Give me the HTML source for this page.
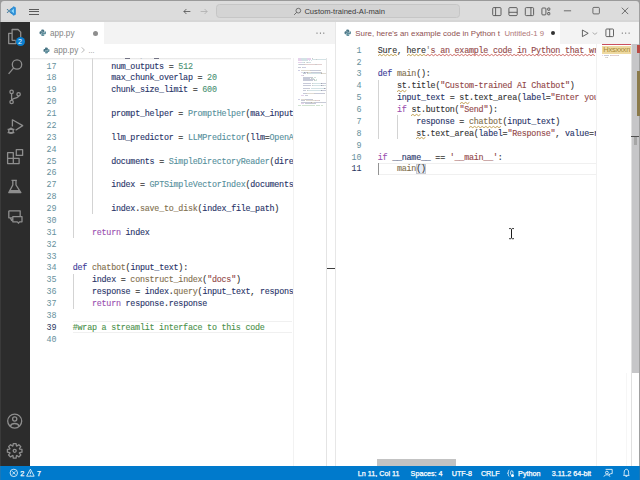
<!DOCTYPE html><html><head><meta charset="utf-8"><style>
html,body{margin:0;padding:0}
body{width:640px;height:480px;overflow:hidden;position:relative;background:#ffffff;font-family:"Liberation Sans",sans-serif}
.cl{position:absolute;white-space:pre;-webkit-text-stroke:0.12px currentColor;font-family:"Liberation Mono",monospace;font-size:8.400px;letter-spacing:-0.2283px;line-height:11.875px;height:11.875px}
.ln{position:absolute;width:30px;text-align:right;white-space:pre;font-family:"Liberation Mono",monospace;font-size:8.400px;letter-spacing:-0.2283px;line-height:11.875px}
.ui{position:absolute;white-space:pre;font-family:"Liberation Sans",sans-serif;line-height:10px}
</style></head><body>
<div style="position:absolute;left:0.000px;top:0.000px;width:640.000px;height:21.875px;background:#dcdcdc"></div>
<div style="position:absolute;left:0.000px;top:19.600px;width:640.000px;height:2.300px;background:#d6d6d6"></div>
<svg style="position:absolute;left:5.900px;top:6.400px;" width="10.5" height="10" viewBox="0 0 100 100"><path fill="#2d6f96" d="M4 33 L12 29 L60 72 L52 80 Z M4 67 L12 71 L60 28 L52 20 Z"/><path fill="#2f8fd6" d="M73 3 L96 14 V86 L73 97 L36 60 L44 50 L36 40 Z"/><path fill="#8fdcff" d="M76 26 L50 50 L76 74 Z"/></svg>
<div style="position:absolute;left:29.000px;top:8.550px;width:9.800px;height:0.900px;background:#5a5a5a"></div>
<div style="position:absolute;left:29.000px;top:11.050px;width:9.800px;height:0.900px;background:#5a5a5a"></div>
<div style="position:absolute;left:29.000px;top:13.550px;width:9.800px;height:0.900px;background:#5a5a5a"></div>
<svg style="position:absolute;left:181.500px;top:7.000px;" width="10" height="9" viewBox="0 0 16 16"><path d="M14 8H2.5 M7 3.5 L2.5 8 L7 12.5" fill="none" stroke="#424242" stroke-width="1.3"/></svg>
<svg style="position:absolute;left:198.500px;top:7.000px;" width="10" height="9" viewBox="0 0 16 16"><path d="M2 8H13.5 M9 3.5 L13.5 8 L9 12.5" fill="none" stroke="#a8a8a8" stroke-width="1.3"/></svg>
<div style="position:absolute;left:215.600px;top:3.900px;width:244.800px;height:14.600px;background:#d4d4d4;border:0.65px solid #c6c6c6;border-radius:3.5px;box-sizing:border-box"></div>
<svg style="position:absolute;left:292.500px;top:6.800px;" width="9" height="9" viewBox="0 0 16 16"><circle cx="9.5" cy="6.5" r="4.2" fill="none" stroke="#505050" stroke-width="1.3"/><path d="M6.5 9.5 L2 14" stroke="#505050" stroke-width="1.4"/></svg>
<div style="position:absolute;left:304.400px;top:6.800px;white-space:pre;font-size:7.6px;color:#3b3b3b;line-height:10px">Custom-trained-AI-main</div>
<svg style="position:absolute;left:0;top:0;" width="640" height="480" viewBox="0 0 640 480"><g fill="none" stroke="#4a4a4a" stroke-width="0.85"><rect x="492.7" y="7.6" width="8.3" height="8.0" rx="1"/><path d="M495.6 7.6 V15.6"/><rect x="508.9" y="7.6" width="8.3" height="8.0" rx="1"/><path d="M508.9 12.3 H517.2"/><rect x="525.3" y="7.6" width="8.3" height="8.0" rx="1"/><path d="M530.9 7.6 V15.6"/><rect x="541.9" y="8.0" width="4.0" height="6.9" rx="0.8"/><rect x="547.7" y="8.0" width="2.1" height="2.3" rx="0.4"/><rect x="547.7" y="12.5" width="2.1" height="2.3" rx="0.4"/></g></svg>
<svg style="position:absolute;left:0;top:0;" width="640" height="480" viewBox="0 0 640 480"><g fill="none" stroke="#3c3c3c" stroke-width="0.7"><path d="M563.9 10.8 H571.1"/><rect x="592.9" y="7.4" width="6.5" height="6.5" rx="1"/><path d="M621.8 7.7 L628.2 14.1 M628.2 7.7 L621.8 14.1"/></g></svg>
<div style="position:absolute;left:0.000px;top:21.875px;width:30.000px;height:444.375px;background:#2c2c2c"></div>
<svg style="position:absolute;left:0;top:0;" width="640" height="480" viewBox="0 0 640 480"><path fill="none" stroke="#8e8e8e" stroke-width="1.3" stroke-linejoin="round" d="M12.1 33.3 H8.7 V43.6 H16.0 V40.4"/><path fill="none" stroke="#8e8e8e" stroke-width="1.3" stroke-linejoin="round" d="M12.1 40.4 V29.5 H18.1 L20.7 32.1 V37.2 M12.1 40.4 H15.6"/><circle fill="none" stroke="#8e8e8e" stroke-width="1.3" stroke-linejoin="round" cx="17.0" cy="64.5" r="4.7"/><path fill="none" stroke="#8e8e8e" stroke-width="1.3" stroke-linejoin="round" d="M13.7 67.9 L8.6 73.9" stroke-width="1.5"/><circle fill="none" stroke="#8e8e8e" stroke-width="1.3" stroke-linejoin="round" cx="11.6" cy="91.9" r="1.7"/><circle fill="none" stroke="#8e8e8e" stroke-width="1.3" stroke-linejoin="round" cx="11.6" cy="102.0" r="1.7"/><circle fill="none" stroke="#8e8e8e" stroke-width="1.3" stroke-linejoin="round" cx="18.6" cy="94.3" r="1.7"/><path fill="none" stroke="#8e8e8e" stroke-width="1.3" stroke-linejoin="round" d="M11.6 93.6 V100.3 M18.6 96.0 C18.6 98.5 12.2 97.8 11.9 100.3"/><path fill="none" stroke="#8e8e8e" stroke-width="1.3" stroke-linejoin="round" d="M12.4 126.5 V119.8 L22.7 125.6 L15.6 130.2"/><circle fill="none" stroke="#8e8e8e" stroke-width="1.3" stroke-linejoin="round" cx="11.0" cy="131.0" r="2.3"/><path fill="none" stroke="#8e8e8e" stroke-width="1.3" stroke-linejoin="round" d="M7.6 129.3 H14.4 M7.6 132.6 H14.4 M11 128.7 V127.6"/><path fill="none" stroke="#8e8e8e" stroke-width="1.3" stroke-linejoin="round" d="M7.6 152.6 H13.3 V163.6 H7.6 Z M7.6 158.3 H19.1 V163.6 H13.3 M16.3 149.6 H22.6 V155.4 H16.3 Z"/><path fill="none" stroke="#8e8e8e" stroke-width="1.3" stroke-linejoin="round" d="M11.5 180.4 H16.9 M12.8 180.6 V185.0 L8.8 192.6 H20.9 L16.0 185.0 V180.6"/><path fill="#8e8e8e" d="M10.1 190.0 H19.6 L20.6 192.4 H9.0 Z"/><path fill="none" stroke="#8e8e8e" stroke-width="1.3" stroke-linejoin="round" d="M8.8 210.8 H20.2 V216.5 M12.6 217.8 H8.8 V210.8 M10.3 217.8 L11.6 220.5 L12.6 219"/><path fill="none" stroke="#8e8e8e" stroke-width="1.3" stroke-linejoin="round" d="M12.8 216.6 H22.0 V221.8 H19.5 L18.5 223.2 L17.3 221.8 H12.8 Z"/><circle fill="none" stroke="#8e8e8e" stroke-width="1.3" stroke-linejoin="round" cx="14.7" cy="421.1" r="7.0"/><circle fill="none" stroke="#8e8e8e" stroke-width="1.3" stroke-linejoin="round" cx="14.7" cy="419.0" r="2.1"/><path fill="none" stroke="#8e8e8e" stroke-width="1.3" stroke-linejoin="round" d="M10.3 426.2 C11.5 422.6 17.9 422.6 19.1 426.2"/><path fill="none" stroke="#8e8e8e" stroke-width="1.3" stroke-linejoin="round" d="M19.59,449.04 L21.97,449.40 L21.97,452.20 L19.59,452.56 L19.41,453.01 L20.83,454.95 L18.85,456.93 L16.91,455.51 L16.46,455.69 L16.10,458.07 L13.30,458.07 L12.94,455.69 L12.49,455.51 L10.55,456.93 L8.57,454.95 L9.99,453.01 L9.81,452.56 L7.43,452.20 L7.43,449.40 L9.81,449.04 L9.99,448.59 L8.57,446.65 L10.55,444.67 L12.49,446.09 L12.94,445.91 L13.30,443.53 L16.10,443.53 L16.46,445.91 L16.91,446.09 L18.85,444.67 L20.83,446.65 L19.41,448.59 Z"/><circle fill="none" stroke="#8e8e8e" stroke-width="1.3" stroke-linejoin="round" cx="14.7" cy="450.8" r="1.5"/></svg>
<div style="position:absolute;left:15.600px;top:36.700px;width:9.200px;height:9.200px;background:#0a7fd0;border-radius:50%"></div>
<div style="position:absolute;left:18.000px;top:37.900px;white-space:pre;font-size:7.0px;color:#ffffff;line-height:7px">2</div>
<div style="position:absolute;left:30.000px;top:21.875px;width:305.600px;height:21.875px;background:#f3f3f3"></div>
<div style="position:absolute;left:30.000px;top:21.875px;width:73.750px;height:21.875px;background:#ffffff"></div>
<svg style="position:absolute;left:38.800px;top:29.100px;" width="7.5" height="7.5" viewBox="0 0 16 16"><path fill="#4a7686" d="M8 1 C4.5 1 4.7 2.6 4.7 2.6 V4.3 H8.1 V4.8 H3.2 C3.2 4.8 1 4.6 1 8.1 C1 11.6 2.9 11.4 2.9 11.4 H4.1 V9.8 C4.1 9.8 4 7.9 6 7.9 H9.3 C9.3 7.9 11.1 7.9 11.1 6.1 V3 C11.1 3 11.4 1 8 1Z"/><path fill="#5f8e9c" d="M8 15 C11.5 15 11.3 13.4 11.3 13.4 V11.7 H7.9 V11.2 H12.8 C12.8 11.2 15 11.4 15 7.9 C15 4.4 13.1 4.6 13.1 4.6 H11.9 V6.2 C11.9 6.2 12 8.1 10 8.1 H6.7 C6.7 8.1 4.9 8.1 4.9 9.9 V13 C4.9 13 4.6 15 8 15Z"/></svg>
<div style="position:absolute;left:50.000px;top:29.300px;white-space:pre;font-size:8.17px;color:#858585;line-height:10px">app.py</div>
<div style="position:absolute;left:93.000px;top:30.700px;width:5.000px;height:5.000px;background:#8e8e8e;border-radius:50%"></div>
<svg style="position:absolute;left:43.200px;top:46.900px;" width="7" height="7" viewBox="0 0 16 16"><path fill="#4a7686" d="M8 1 C4.5 1 4.7 2.6 4.7 2.6 V4.3 H8.1 V4.8 H3.2 C3.2 4.8 1 4.6 1 8.1 C1 11.6 2.9 11.4 2.9 11.4 H4.1 V9.8 C4.1 9.8 4 7.9 6 7.9 H9.3 C9.3 7.9 11.1 7.9 11.1 6.1 V3 C11.1 3 11.4 1 8 1Z"/><path fill="#5f8e9c" d="M8 15 C11.5 15 11.3 13.4 11.3 13.4 V11.7 H7.9 V11.2 H12.8 C12.8 11.2 15 11.4 15 7.9 C15 4.4 13.1 4.6 13.1 4.6 H11.9 V6.2 C11.9 6.2 12 8.1 10 8.1 H6.7 C6.7 8.1 4.9 8.1 4.9 9.9 V13 C4.9 13 4.6 15 8 15Z"/></svg>
<div style="position:absolute;left:53.750px;top:46.400px;white-space:pre;font-size:8.17px;color:#858585;line-height:10px">app.py</div>
<svg style="position:absolute;left:80.800px;top:47.400px;" width="4.5" height="6" viewBox="0 0 6 8"><path d="M1 0.5 L4.5 4 L1 7.5" fill="none" stroke="#858585" stroke-width="0.8"/></svg>
<div style="position:absolute;left:88.600px;top:46.200px;white-space:pre;font-size:7px;color:#858585;line-height:10px">...</div>
<div style="position:absolute;left:30px;top:57.5px;width:262.8px;height:408.75px;overflow:hidden">
<div style="position:absolute;left:42.750px;top:263.750px;width:219.250px;height:11.875px;border-top:0.65px solid #f0f0f0;border-bottom:0.65px solid #f0f0f0;box-sizing:border-box"></div>
<div style="position:absolute;left:42.600px;top:-9.375px;width:0.650px;height:190.000px;background:#d3d3d3"></div>
<div style="position:absolute;left:61.850px;top:-9.375px;width:0.650px;height:166.250px;background:#d3d3d3"></div>
<div style="position:absolute;left:42.600px;top:216.250px;width:0.650px;height:35.625px;background:#d3d3d3"></div>
<div class="cl" style="left:42.750px;top:-7.875px"><span style="color:#333333">        </span><span style="color:#283468">max_input_size</span><span style="color:#333333"> = </span><span style="color:#4d9375">4096</span></div>
<div class="ln" style="left:-3.800px;top:4.000px;color:#66909c">17</div>
<div class="cl" style="left:42.750px;top:4.000px"><span style="color:#333333">        </span><span style="color:#283468">num_outputs</span><span style="color:#333333"> = </span><span style="color:#4d9375">512</span></div>
<div class="ln" style="left:-3.800px;top:15.875px;color:#66909c">18</div>
<div class="cl" style="left:42.750px;top:15.875px"><span style="color:#333333">        </span><span style="color:#283468">max_chunk_overlap</span><span style="color:#333333"> = </span><span style="color:#4d9375">20</span></div>
<div class="ln" style="left:-3.800px;top:27.750px;color:#66909c">19</div>
<div class="cl" style="left:42.750px;top:27.750px"><span style="color:#333333">        </span><span style="color:#283468">chunk_size_limit</span><span style="color:#333333"> = </span><span style="color:#4d9375">600</span></div>
<div class="ln" style="left:-3.800px;top:39.625px;color:#66909c">20</div>
<div class="cl" style="left:42.750px;top:39.625px"></div>
<div class="ln" style="left:-3.800px;top:51.500px;color:#66909c">21</div>
<div class="cl" style="left:42.750px;top:51.500px"><span style="color:#333333">        </span><span style="color:#283468">prompt_helper</span><span style="color:#333333"> = </span><span style="color:#56909c">PromptHelper</span><span style="color:#333333">(</span><span style="color:#283468">max_input_size</span><span style="color:#333333">, </span><span style="color:#283468">num_outputs</span><span style="color:#333333">, </span><span style="color:#283468">max_chunk_overlap</span><span style="color:#333333">)</span></div>
<div class="ln" style="left:-3.800px;top:63.375px;color:#66909c">22</div>
<div class="cl" style="left:42.750px;top:63.375px"></div>
<div class="ln" style="left:-3.800px;top:75.250px;color:#66909c">23</div>
<div class="cl" style="left:42.750px;top:75.250px"><span style="color:#333333">        </span><span style="color:#283468">llm_predictor</span><span style="color:#333333"> = </span><span style="color:#56909c">LLMPredictor</span><span style="color:#333333">(</span><span style="color:#283468">llm</span><span style="color:#333333">=</span><span style="color:#56909c">OpenAI</span><span style="color:#333333">(</span><span style="color:#283468">temperature</span><span style="color:#333333">=</span><span style="color:#4d9375">0.7</span><span style="color:#333333">)</span></div>
<div class="ln" style="left:-3.800px;top:87.125px;color:#66909c">24</div>
<div class="cl" style="left:42.750px;top:87.125px"></div>
<div class="ln" style="left:-3.800px;top:99.000px;color:#66909c">25</div>
<div class="cl" style="left:42.750px;top:99.000px"><span style="color:#333333">        </span><span style="color:#283468">documents</span><span style="color:#333333"> = </span><span style="color:#56909c">SimpleDirectoryReader</span><span style="color:#333333">(</span><span style="color:#283468">directory_path</span><span style="color:#333333">).</span><span style="color:#82704e">load_data</span><span style="color:#333333">()</span></div>
<div class="ln" style="left:-3.800px;top:110.875px;color:#66909c">26</div>
<div class="cl" style="left:42.750px;top:110.875px"></div>
<div class="ln" style="left:-3.800px;top:122.750px;color:#66909c">27</div>
<div class="cl" style="left:42.750px;top:122.750px"><span style="color:#333333">        </span><span style="color:#283468">index</span><span style="color:#333333"> = </span><span style="color:#56909c">GPTSimpleVectorIndex</span><span style="color:#333333">(</span><span style="color:#283468">documents</span><span style="color:#333333">, </span><span style="color:#283468">llm_predictor</span><span style="color:#333333">=</span><span style="color:#283468">llm_predictor</span></div>
<div class="ln" style="left:-3.800px;top:134.625px;color:#66909c">28</div>
<div class="cl" style="left:42.750px;top:134.625px"></div>
<div class="ln" style="left:-3.800px;top:146.500px;color:#66909c">29</div>
<div class="cl" style="left:42.750px;top:146.500px"><span style="color:#333333">        </span><span style="color:#283468">index</span><span style="color:#333333">.</span><span style="color:#82704e">save_to_disk</span><span style="color:#333333">(</span><span style="color:#283468">index_file_path</span><span style="color:#333333">)</span></div>
<div class="ln" style="left:-3.800px;top:158.375px;color:#66909c">30</div>
<div class="cl" style="left:42.750px;top:158.375px"></div>
<div class="ln" style="left:-3.800px;top:170.250px;color:#66909c">31</div>
<div class="cl" style="left:42.750px;top:170.250px"><span style="color:#333333">    </span><span style="color:#9a50b0">return</span><span style="color:#333333"> </span><span style="color:#283468">index</span></div>
<div class="ln" style="left:-3.800px;top:182.125px;color:#66909c">32</div>
<div class="cl" style="left:42.750px;top:182.125px"></div>
<div class="ln" style="left:-3.800px;top:194.000px;color:#66909c">33</div>
<div class="cl" style="left:42.750px;top:194.000px"></div>
<div class="ln" style="left:-3.800px;top:205.875px;color:#66909c">34</div>
<div class="cl" style="left:42.750px;top:205.875px"><span style="color:#3c3c98">def</span><span style="color:#333333"> </span><span style="color:#82704e">chatbot</span><span style="color:#333333">(</span><span style="color:#283468">input_text</span><span style="color:#333333">):</span></div>
<div class="ln" style="left:-3.800px;top:217.750px;color:#66909c">35</div>
<div class="cl" style="left:42.750px;top:217.750px"><span style="color:#333333">    </span><span style="color:#283468">index</span><span style="color:#333333"> = </span><span style="color:#82704e">construct_index</span><span style="color:#333333">(</span><span style="color:#924848">&quot;docs&quot;</span><span style="color:#333333">)</span></div>
<div class="ln" style="left:-3.800px;top:229.625px;color:#66909c">36</div>
<div class="cl" style="left:42.750px;top:229.625px"><span style="color:#333333">    </span><span style="color:#283468">response</span><span style="color:#333333"> = </span><span style="color:#283468">index</span><span style="color:#333333">.</span><span style="color:#82704e">query</span><span style="color:#333333">(</span><span style="color:#283468">input_text</span><span style="color:#333333">, </span><span style="color:#283468">response_mode</span><span style="color:#333333">=</span><span style="color:#924848">&quot;compact&quot;</span><span style="color:#333333">)</span></div>
<div class="ln" style="left:-3.800px;top:241.500px;color:#66909c">37</div>
<div class="cl" style="left:42.750px;top:241.500px"><span style="color:#333333">    </span><span style="color:#9a50b0">return</span><span style="color:#333333"> </span><span style="color:#283468">response</span><span style="color:#333333">.</span><span style="color:#283468">response</span></div>
<div class="ln" style="left:-3.800px;top:253.375px;color:#66909c">38</div>
<div class="cl" style="left:42.750px;top:253.375px"></div>
<div class="ln" style="left:-3.800px;top:265.250px;color:#283660">39</div>
<div class="cl" style="left:42.750px;top:265.250px"><span style="color:#4c924c">#wrap a streamlit interface to this code</span></div>
<div class="ln" style="left:-3.800px;top:277.125px;color:#66909c">40</div>
<div class="cl" style="left:42.750px;top:277.125px"></div>
<div style="position:absolute;left:0.000px;top:0.000px;width:261.250px;height:2.600px;background:linear-gradient(#e2e2e2,rgba(226,226,226,0))"></div>
</div>
<div style="position:absolute;left:125.400px;top:57.550px;width:4.600px;height:0.800px;background:#55556a;opacity:0.8"></div>
<div style="position:absolute;left:154.300px;top:57.550px;width:4.600px;height:0.800px;background:#55556a;opacity:0.8"></div>
<div style="position:absolute;left:298.000px;top:57.750px;width:2.500px;height:0.750px;background:#9a50b0;opacity:0.26"></div>
<div style="position:absolute;left:301.125px;top:57.750px;width:5.625px;height:0.750px;background:#56909c;opacity:0.26"></div>
<div style="position:absolute;left:307.375px;top:57.750px;width:3.750px;height:0.750px;background:#9a50b0;opacity:0.26"></div>
<div style="position:absolute;left:311.750px;top:57.750px;width:0.625px;height:0.750px;background:#333333;opacity:0.26"></div>
<div style="position:absolute;left:298.000px;top:59.000px;width:2.500px;height:0.750px;background:#9a50b0;opacity:0.26"></div>
<div style="position:absolute;left:301.125px;top:59.000px;width:5.625px;height:0.750px;background:#56909c;opacity:0.26"></div>
<div style="position:absolute;left:307.375px;top:59.000px;width:3.750px;height:0.750px;background:#9a50b0;opacity:0.26"></div>
<div style="position:absolute;left:311.750px;top:59.000px;width:3.750px;height:0.750px;background:#56909c;opacity:0.26"></div>
<div style="position:absolute;left:315.500px;top:59.000px;width:0.625px;height:0.750px;background:#333333;opacity:0.26"></div>
<div style="position:absolute;left:316.750px;top:59.000px;width:8.750px;height:0.750px;background:#56909c;opacity:0.26"></div>
<div style="position:absolute;left:325.500px;top:59.000px;width:0.500px;height:0.750px;background:#333333;opacity:0.26"></div>
<div style="position:absolute;left:298.000px;top:60.250px;width:3.750px;height:0.750px;background:#9a50b0;opacity:0.26"></div>
<div style="position:absolute;left:302.375px;top:60.250px;width:5.625px;height:0.750px;background:#56909c;opacity:0.26"></div>
<div style="position:absolute;left:308.625px;top:60.250px;width:1.250px;height:0.750px;background:#9a50b0;opacity:0.26"></div>
<div style="position:absolute;left:310.500px;top:60.250px;width:1.250px;height:0.750px;background:#56909c;opacity:0.26"></div>
<div style="position:absolute;left:298.000px;top:61.500px;width:3.750px;height:0.750px;background:#9a50b0;opacity:0.26"></div>
<div style="position:absolute;left:302.375px;top:61.500px;width:1.875px;height:0.750px;background:#56909c;opacity:0.26"></div>
<div style="position:absolute;left:304.250px;top:61.500px;width:0.625px;height:0.750px;background:#333333;opacity:0.26"></div>
<div style="position:absolute;left:305.500px;top:61.500px;width:1.250px;height:0.750px;background:#56909c;opacity:0.26"></div>
<div style="position:absolute;left:306.750px;top:61.500px;width:0.625px;height:0.750px;background:#333333;opacity:0.26"></div>
<div style="position:absolute;left:308.000px;top:61.500px;width:2.500px;height:0.750px;background:#56909c;opacity:0.26"></div>
<div style="position:absolute;left:298.000px;top:64.000px;width:1.250px;height:0.750px;background:#56909c;opacity:0.26"></div>
<div style="position:absolute;left:299.250px;top:64.000px;width:0.625px;height:0.750px;background:#333333;opacity:0.26"></div>
<div style="position:absolute;left:299.875px;top:64.000px;width:4.375px;height:0.750px;background:#283468;opacity:0.26"></div>
<div style="position:absolute;left:304.250px;top:64.000px;width:0.625px;height:0.750px;background:#333333;opacity:0.26"></div>
<div style="position:absolute;left:304.875px;top:64.000px;width:10.000px;height:0.750px;background:#924848;opacity:0.26"></div>
<div style="position:absolute;left:314.875px;top:64.000px;width:0.625px;height:0.750px;background:#333333;opacity:0.26"></div>
<div style="position:absolute;left:316.125px;top:64.000px;width:0.625px;height:0.750px;background:#333333;opacity:0.26"></div>
<div style="position:absolute;left:317.375px;top:64.000px;width:5.000px;height:0.750px;background:#924848;opacity:0.26"></div>
<div style="position:absolute;left:298.000px;top:66.500px;width:3.125px;height:0.750px;background:#283468;opacity:0.26"></div>
<div style="position:absolute;left:301.750px;top:66.500px;width:0.625px;height:0.750px;background:#333333;opacity:0.26"></div>
<div style="position:absolute;left:303.000px;top:66.500px;width:2.500px;height:0.750px;background:#3c3c98;opacity:0.26"></div>
<div style="position:absolute;left:298.000px;top:70.250px;width:1.875px;height:0.750px;background:#3c3c98;opacity:0.26"></div>
<div style="position:absolute;left:300.500px;top:70.250px;width:9.375px;height:0.750px;background:#82704e;opacity:0.26"></div>
<div style="position:absolute;left:309.875px;top:70.250px;width:0.625px;height:0.750px;background:#333333;opacity:0.26"></div>
<div style="position:absolute;left:310.500px;top:70.250px;width:8.750px;height:0.750px;background:#283468;opacity:0.26"></div>
<div style="position:absolute;left:319.250px;top:70.250px;width:1.250px;height:0.750px;background:#333333;opacity:0.26"></div>
<div style="position:absolute;left:300.500px;top:71.500px;width:1.250px;height:0.750px;background:#9a50b0;opacity:0.26"></div>
<div style="position:absolute;left:302.375px;top:71.500px;width:1.250px;height:0.750px;background:#56909c;opacity:0.26"></div>
<div style="position:absolute;left:303.625px;top:71.500px;width:0.625px;height:0.750px;background:#333333;opacity:0.26"></div>
<div style="position:absolute;left:304.250px;top:71.500px;width:2.500px;height:0.750px;background:#283468;opacity:0.26"></div>
<div style="position:absolute;left:306.750px;top:71.500px;width:0.625px;height:0.750px;background:#333333;opacity:0.26"></div>
<div style="position:absolute;left:307.375px;top:71.500px;width:3.750px;height:0.750px;background:#82704e;opacity:0.26"></div>
<div style="position:absolute;left:311.125px;top:71.500px;width:0.625px;height:0.750px;background:#333333;opacity:0.26"></div>
<div style="position:absolute;left:311.750px;top:71.500px;width:9.375px;height:0.750px;background:#283468;opacity:0.26"></div>
<div style="position:absolute;left:321.125px;top:71.500px;width:1.250px;height:0.750px;background:#333333;opacity:0.26"></div>
<div style="position:absolute;left:303.000px;top:72.750px;width:3.125px;height:0.750px;background:#283468;opacity:0.26"></div>
<div style="position:absolute;left:306.750px;top:72.750px;width:0.625px;height:0.750px;background:#333333;opacity:0.26"></div>
<div style="position:absolute;left:308.000px;top:72.750px;width:12.500px;height:0.750px;background:#56909c;opacity:0.26"></div>
<div style="position:absolute;left:320.500px;top:72.750px;width:0.625px;height:0.750px;background:#333333;opacity:0.26"></div>
<div style="position:absolute;left:321.125px;top:72.750px;width:4.875px;height:0.750px;background:#82704e;opacity:0.26"></div>
<div style="position:absolute;left:300.500px;top:75.250px;width:2.500px;height:0.750px;background:#9a50b0;opacity:0.26"></div>
<div style="position:absolute;left:303.000px;top:75.250px;width:0.625px;height:0.750px;background:#333333;opacity:0.26"></div>
<div style="position:absolute;left:303.000px;top:76.500px;width:8.750px;height:0.750px;background:#283468;opacity:0.26"></div>
<div style="position:absolute;left:312.375px;top:76.500px;width:0.625px;height:0.750px;background:#333333;opacity:0.26"></div>
<div style="position:absolute;left:313.625px;top:76.500px;width:2.500px;height:0.750px;background:#4d9375;opacity:0.26"></div>
<div style="position:absolute;left:303.000px;top:77.750px;width:6.875px;height:0.750px;background:#283468;opacity:0.26"></div>
<div style="position:absolute;left:310.500px;top:77.750px;width:0.625px;height:0.750px;background:#333333;opacity:0.26"></div>
<div style="position:absolute;left:311.750px;top:77.750px;width:1.875px;height:0.750px;background:#4d9375;opacity:0.26"></div>
<div style="position:absolute;left:303.000px;top:79.000px;width:10.625px;height:0.750px;background:#283468;opacity:0.26"></div>
<div style="position:absolute;left:314.250px;top:79.000px;width:0.625px;height:0.750px;background:#333333;opacity:0.26"></div>
<div style="position:absolute;left:315.500px;top:79.000px;width:1.250px;height:0.750px;background:#4d9375;opacity:0.26"></div>
<div style="position:absolute;left:303.000px;top:80.250px;width:10.000px;height:0.750px;background:#283468;opacity:0.26"></div>
<div style="position:absolute;left:313.625px;top:80.250px;width:0.625px;height:0.750px;background:#333333;opacity:0.26"></div>
<div style="position:absolute;left:314.875px;top:80.250px;width:1.875px;height:0.750px;background:#4d9375;opacity:0.26"></div>
<div style="position:absolute;left:303.000px;top:82.750px;width:8.125px;height:0.750px;background:#283468;opacity:0.26"></div>
<div style="position:absolute;left:311.750px;top:82.750px;width:0.625px;height:0.750px;background:#333333;opacity:0.26"></div>
<div style="position:absolute;left:313.000px;top:82.750px;width:7.500px;height:0.750px;background:#56909c;opacity:0.26"></div>
<div style="position:absolute;left:320.500px;top:82.750px;width:0.625px;height:0.750px;background:#333333;opacity:0.26"></div>
<div style="position:absolute;left:321.125px;top:82.750px;width:4.875px;height:0.750px;background:#283468;opacity:0.26"></div>
<div style="position:absolute;left:303.000px;top:85.250px;width:8.125px;height:0.750px;background:#283468;opacity:0.26"></div>
<div style="position:absolute;left:311.750px;top:85.250px;width:0.625px;height:0.750px;background:#333333;opacity:0.26"></div>
<div style="position:absolute;left:313.000px;top:85.250px;width:7.500px;height:0.750px;background:#56909c;opacity:0.26"></div>
<div style="position:absolute;left:320.500px;top:85.250px;width:0.625px;height:0.750px;background:#333333;opacity:0.26"></div>
<div style="position:absolute;left:321.125px;top:85.250px;width:1.875px;height:0.750px;background:#283468;opacity:0.26"></div>
<div style="position:absolute;left:323.000px;top:85.250px;width:0.625px;height:0.750px;background:#333333;opacity:0.26"></div>
<div style="position:absolute;left:323.625px;top:85.250px;width:2.375px;height:0.750px;background:#56909c;opacity:0.26"></div>
<div style="position:absolute;left:303.000px;top:87.750px;width:5.625px;height:0.750px;background:#283468;opacity:0.26"></div>
<div style="position:absolute;left:309.250px;top:87.750px;width:0.625px;height:0.750px;background:#333333;opacity:0.26"></div>
<div style="position:absolute;left:310.500px;top:87.750px;width:13.125px;height:0.750px;background:#56909c;opacity:0.26"></div>
<div style="position:absolute;left:323.625px;top:87.750px;width:0.625px;height:0.750px;background:#333333;opacity:0.26"></div>
<div style="position:absolute;left:324.250px;top:87.750px;width:1.750px;height:0.750px;background:#283468;opacity:0.26"></div>
<div style="position:absolute;left:303.000px;top:90.250px;width:3.125px;height:0.750px;background:#283468;opacity:0.26"></div>
<div style="position:absolute;left:306.750px;top:90.250px;width:0.625px;height:0.750px;background:#333333;opacity:0.26"></div>
<div style="position:absolute;left:308.000px;top:90.250px;width:12.500px;height:0.750px;background:#56909c;opacity:0.26"></div>
<div style="position:absolute;left:320.500px;top:90.250px;width:0.625px;height:0.750px;background:#333333;opacity:0.26"></div>
<div style="position:absolute;left:321.125px;top:90.250px;width:4.875px;height:0.750px;background:#283468;opacity:0.26"></div>
<div style="position:absolute;left:303.000px;top:92.750px;width:3.125px;height:0.750px;background:#283468;opacity:0.26"></div>
<div style="position:absolute;left:306.125px;top:92.750px;width:0.625px;height:0.750px;background:#333333;opacity:0.26"></div>
<div style="position:absolute;left:306.750px;top:92.750px;width:7.500px;height:0.750px;background:#82704e;opacity:0.26"></div>
<div style="position:absolute;left:314.250px;top:92.750px;width:0.625px;height:0.750px;background:#333333;opacity:0.26"></div>
<div style="position:absolute;left:314.875px;top:92.750px;width:9.375px;height:0.750px;background:#283468;opacity:0.26"></div>
<div style="position:absolute;left:324.250px;top:92.750px;width:0.625px;height:0.750px;background:#333333;opacity:0.26"></div>
<div style="position:absolute;left:300.500px;top:95.250px;width:3.750px;height:0.750px;background:#9a50b0;opacity:0.26"></div>
<div style="position:absolute;left:304.875px;top:95.250px;width:3.125px;height:0.750px;background:#283468;opacity:0.26"></div>
<div style="position:absolute;left:298.000px;top:99.000px;width:1.875px;height:0.750px;background:#3c3c98;opacity:0.26"></div>
<div style="position:absolute;left:300.500px;top:99.000px;width:4.375px;height:0.750px;background:#82704e;opacity:0.26"></div>
<div style="position:absolute;left:304.875px;top:99.000px;width:0.625px;height:0.750px;background:#333333;opacity:0.26"></div>
<div style="position:absolute;left:305.500px;top:99.000px;width:6.250px;height:0.750px;background:#283468;opacity:0.26"></div>
<div style="position:absolute;left:311.750px;top:99.000px;width:1.250px;height:0.750px;background:#333333;opacity:0.26"></div>
<div style="position:absolute;left:300.500px;top:100.250px;width:3.125px;height:0.750px;background:#283468;opacity:0.26"></div>
<div style="position:absolute;left:304.250px;top:100.250px;width:0.625px;height:0.750px;background:#333333;opacity:0.26"></div>
<div style="position:absolute;left:305.500px;top:100.250px;width:9.375px;height:0.750px;background:#82704e;opacity:0.26"></div>
<div style="position:absolute;left:314.875px;top:100.250px;width:0.625px;height:0.750px;background:#333333;opacity:0.26"></div>
<div style="position:absolute;left:315.500px;top:100.250px;width:3.750px;height:0.750px;background:#924848;opacity:0.26"></div>
<div style="position:absolute;left:319.250px;top:100.250px;width:0.625px;height:0.750px;background:#333333;opacity:0.26"></div>
<div style="position:absolute;left:300.500px;top:101.500px;width:5.000px;height:0.750px;background:#283468;opacity:0.26"></div>
<div style="position:absolute;left:306.125px;top:101.500px;width:0.625px;height:0.750px;background:#333333;opacity:0.26"></div>
<div style="position:absolute;left:307.375px;top:101.500px;width:3.125px;height:0.750px;background:#283468;opacity:0.26"></div>
<div style="position:absolute;left:310.500px;top:101.500px;width:0.625px;height:0.750px;background:#333333;opacity:0.26"></div>
<div style="position:absolute;left:311.125px;top:101.500px;width:3.125px;height:0.750px;background:#82704e;opacity:0.26"></div>
<div style="position:absolute;left:314.250px;top:101.500px;width:0.625px;height:0.750px;background:#333333;opacity:0.26"></div>
<div style="position:absolute;left:314.875px;top:101.500px;width:6.250px;height:0.750px;background:#283468;opacity:0.26"></div>
<div style="position:absolute;left:321.125px;top:101.500px;width:0.625px;height:0.750px;background:#333333;opacity:0.26"></div>
<div style="position:absolute;left:322.375px;top:101.500px;width:3.625px;height:0.750px;background:#283468;opacity:0.26"></div>
<div style="position:absolute;left:300.500px;top:102.750px;width:3.750px;height:0.750px;background:#9a50b0;opacity:0.26"></div>
<div style="position:absolute;left:304.875px;top:102.750px;width:5.000px;height:0.750px;background:#283468;opacity:0.26"></div>
<div style="position:absolute;left:309.875px;top:102.750px;width:0.625px;height:0.750px;background:#333333;opacity:0.26"></div>
<div style="position:absolute;left:310.500px;top:102.750px;width:5.000px;height:0.750px;background:#283468;opacity:0.26"></div>
<div style="position:absolute;left:298.000px;top:105.250px;width:3.125px;height:0.750px;background:#4c924c;opacity:0.26"></div>
<div style="position:absolute;left:301.750px;top:105.250px;width:0.625px;height:0.750px;background:#4c924c;opacity:0.26"></div>
<div style="position:absolute;left:303.000px;top:105.250px;width:5.625px;height:0.750px;background:#4c924c;opacity:0.26"></div>
<div style="position:absolute;left:309.250px;top:105.250px;width:5.625px;height:0.750px;background:#4c924c;opacity:0.26"></div>
<div style="position:absolute;left:315.500px;top:105.250px;width:1.250px;height:0.750px;background:#4c924c;opacity:0.26"></div>
<div style="position:absolute;left:317.375px;top:105.250px;width:2.500px;height:0.750px;background:#4c924c;opacity:0.26"></div>
<div style="position:absolute;left:320.500px;top:105.250px;width:2.500px;height:0.750px;background:#4c924c;opacity:0.26"></div>
<div style="position:absolute;left:326.000px;top:57.500px;width:0.650px;height:408.750px;background:#e4e4e4"></div>
<div style="position:absolute;left:292.900px;top:57.500px;width:0.900px;height:408.750px;background:#f2f2f2"></div>
<div style="position:absolute;left:326.600px;top:267.900px;width:8.400px;height:1.400px;background:#3e3e3e"></div>
<div style="position:absolute;left:335.300px;top:21.875px;width:0.700px;height:444.375px;background:#e7e7e7"></div>
<div style="position:absolute;left:336.000px;top:21.875px;width:304.000px;height:21.875px;background:#f3f3f3"></div>
<div style="position:absolute;left:336.000px;top:21.875px;width:224.000px;height:21.875px;background:#ffffff"></div>
<svg style="position:absolute;left:344.200px;top:29.100px;" width="7.5" height="7.5" viewBox="0 0 16 16"><path fill="#4a7686" d="M8 1 C4.5 1 4.7 2.6 4.7 2.6 V4.3 H8.1 V4.8 H3.2 C3.2 4.8 1 4.6 1 8.1 C1 11.6 2.9 11.4 2.9 11.4 H4.1 V9.8 C4.1 9.8 4 7.9 6 7.9 H9.3 C9.3 7.9 11.1 7.9 11.1 6.1 V3 C11.1 3 11.4 1 8 1Z"/><path fill="#5f8e9c" d="M8 15 C11.5 15 11.3 13.4 11.3 13.4 V11.7 H7.9 V11.2 H12.8 C12.8 11.2 15 11.4 15 7.9 C15 4.4 13.1 4.6 13.1 4.6 H11.9 V6.2 C11.9 6.2 12 8.1 10 8.1 H6.7 C6.7 8.1 4.9 8.1 4.9 9.9 V13 C4.9 13 4.6 15 8 15Z"/></svg>
<div style="position:absolute;left:355.300px;top:28.600px;white-space:pre;font-size:7.93px;color:#8e5050;line-height:10px">Sure, here&#x27;s an example code in Python t</div>
<div style="position:absolute;left:504.400px;top:29.200px;white-space:pre;font-size:7.75px;color:#b07878;line-height:10px">Untitled-1 9</div>
<div style="position:absolute;left:550.800px;top:31.000px;width:4.200px;height:4.200px;background:#333333;border-radius:50%"></div>
<svg style="position:absolute;left:0;top:0;" width="640" height="480" viewBox="0 0 640 480"><path d="M582.4 30.0 L588.2 33.3 L582.4 36.6 Z" fill="none" stroke="#4a4a4a" stroke-width="0.85" stroke-linejoin="round"/><path d="M592.6 32.6 L594.9 34.4 L597.2 32.6" fill="none" stroke="#9a9a9a" stroke-width="0.8"/><rect x="605.9" y="29.0" width="7.6" height="7.6" rx="0.8" fill="none" stroke="#4a4a4a" stroke-width="0.85"/><path d="M609.7 29.0 V36.6" stroke="#4a4a4a" stroke-width="0.85"/><circle cx="622.3" cy="33.1" r="0.6" fill="#555"/><circle cx="625.7" cy="33.1" r="0.6" fill="#555"/><circle cx="629.1" cy="33.1" r="0.6" fill="#555"/><circle cx="317.0" cy="33.1" r="0.6" fill="#555"/><circle cx="320.4" cy="33.1" r="0.6" fill="#555"/><circle cx="323.8" cy="33.1" r="0.6" fill="#555"/></svg>
<div style="position:absolute;left:336px;top:43.75px;width:261px;height:422.5px;overflow:hidden">
<div style="position:absolute;left:41.500px;top:119.150px;width:223.000px;height:11.875px;border-top:0.65px solid #f0f0f0;border-bottom:0.65px solid #f0f0f0;box-sizing:border-box"></div>
<div style="position:absolute;left:41.600px;top:36.025px;width:0.650px;height:59.375px;background:#d3d3d3"></div>
<div style="position:absolute;left:60.850px;top:71.650px;width:0.650px;height:23.750px;background:#d3d3d3"></div>
<div style="position:absolute;left:41.600px;top:119.150px;width:0.650px;height:11.875px;background:#939393"></div>
<div style="position:absolute;left:80.100px;top:120.050px;width:9.600px;height:10.200px;background:#e6ecf6;border:0.65px solid #c8cad2;box-sizing:border-box"></div>
<div class="ln" style="left:-4.800px;top:1.900px;color:#66909c">1</div>
<div class="cl" style="left:41.750px;top:1.900px"><span style="color:#333333">Sure</span><span style="color:#333333">, </span><span style="color:#333333">here</span><span style="color:#8a8a8a">&#x27;</span><span style="color:#924848">s an example code in Python that wraps the chatbot function</span></div>
<div class="ln" style="left:-4.800px;top:13.775px;color:#66909c">2</div>
<div class="cl" style="left:41.750px;top:13.775px"></div>
<div class="ln" style="left:-4.800px;top:25.650px;color:#66909c">3</div>
<div class="cl" style="left:41.750px;top:25.650px"><span style="color:#3c3c98">def</span><span style="color:#333333"> </span><span style="color:#82704e">main</span><span style="color:#333333">():</span></div>
<div class="ln" style="left:-4.800px;top:37.525px;color:#66909c">4</div>
<div class="cl" style="left:41.750px;top:37.525px"><span style="color:#333333">    </span><span style="color:#333333">st</span><span style="color:#333333">.</span><span style="color:#333333">title</span><span style="color:#333333">(</span><span style="color:#924848">&quot;Custom-trained AI Chatbot&quot;</span><span style="color:#333333">)</span></div>
<div class="ln" style="left:-4.800px;top:49.400px;color:#66909c">5</div>
<div class="cl" style="left:41.750px;top:49.400px"><span style="color:#333333">    </span><span style="color:#283468">input_text</span><span style="color:#333333"> = </span><span style="color:#333333">st</span><span style="color:#333333">.</span><span style="color:#333333">text_area</span><span style="color:#333333">(</span><span style="color:#283468">label</span><span style="color:#333333">=</span><span style="color:#924848">&quot;Enter your text here&quot;</span><span style="color:#333333">)</span></div>
<div class="ln" style="left:-4.800px;top:61.275px;color:#66909c">6</div>
<div class="cl" style="left:41.750px;top:61.275px"><span style="color:#333333">    </span><span style="color:#9a50b0">if</span><span style="color:#333333"> </span><span style="color:#333333">st</span><span style="color:#333333">.</span><span style="color:#333333">button</span><span style="color:#333333">(</span><span style="color:#924848">&quot;Send&quot;</span><span style="color:#333333">):</span></div>
<div class="ln" style="left:-4.800px;top:73.150px;color:#66909c">7</div>
<div class="cl" style="left:41.750px;top:73.150px"><span style="color:#333333">        </span><span style="color:#283468">response</span><span style="color:#333333"> = </span><span style="color:#82704e">chatbot</span><span style="color:#333333">(</span><span style="color:#283468">input_text</span><span style="color:#333333">)</span></div>
<div class="ln" style="left:-4.800px;top:85.025px;color:#66909c">8</div>
<div class="cl" style="left:41.750px;top:85.025px"><span style="color:#333333">        </span><span style="color:#333333">st</span><span style="color:#333333">.</span><span style="color:#333333">text_area</span><span style="color:#333333">(</span><span style="color:#283468">label</span><span style="color:#333333">=</span><span style="color:#924848">&quot;Response&quot;</span><span style="color:#333333">, </span><span style="color:#283468">value</span><span style="color:#333333">=</span><span style="color:#283468">response</span><span style="color:#333333">)</span></div>
<div class="ln" style="left:-4.800px;top:96.900px;color:#66909c">9</div>
<div class="cl" style="left:41.750px;top:96.900px"></div>
<div class="ln" style="left:-4.800px;top:108.775px;color:#66909c">10</div>
<div class="cl" style="left:41.750px;top:108.775px"><span style="color:#9a50b0">if</span><span style="color:#333333"> </span><span style="color:#283468">__name__</span><span style="color:#333333"> == </span><span style="color:#924848">&#x27;__main__&#x27;</span><span style="color:#333333">:</span></div>
<div class="ln" style="left:-4.800px;top:120.650px;color:#283660">11</div>
<div class="cl" style="left:41.750px;top:120.650px"><span style="color:#333333">    </span><span style="color:#82704e">main</span><span style="color:#333333">()</span></div>
</div>
<svg style="position:absolute;left:377.750px;top:54.350px;overflow:visible;opacity:1.0" width="21.25" height="2"><polyline points="0.000,1.70 1.875,0.40 3.750,1.70 5.625,0.40 7.500,1.70 9.375,0.40 11.250,1.70 13.125,0.40 15.000,1.70 16.875,0.40 18.750,1.70" fill="none" stroke="#b48a2c" stroke-width="0.8"/></svg>
<svg style="position:absolute;left:406.625px;top:54.350px;overflow:visible;opacity:1.0" width="21.25" height="2"><polyline points="0.000,1.70 1.875,0.40 3.750,1.70 5.625,0.40 7.500,1.70 9.375,0.40 11.250,1.70 13.125,0.40 15.000,1.70 16.875,0.40 18.750,1.70" fill="none" stroke="#b48a2c" stroke-width="0.8"/></svg>
<svg style="position:absolute;left:425.875px;top:54.350px;overflow:visible;opacity:1.0" width="172.12" height="2"><polyline points="0.000,1.70 1.875,0.40 3.750,1.70 5.625,0.40 7.500,1.70 9.375,0.40 11.250,1.70 13.125,0.40 15.000,1.70 16.875,0.40 18.750,1.70 20.625,0.40 22.500,1.70 24.375,0.40 26.250,1.70 28.125,0.40 30.000,1.70 31.875,0.40 33.750,1.70 35.625,0.40 37.500,1.70 39.375,0.40 41.250,1.70 43.125,0.40 45.000,1.70 46.875,0.40 48.750,1.70 50.625,0.40 52.500,1.70 54.375,0.40 56.250,1.70 58.125,0.40 60.000,1.70 61.875,0.40 63.750,1.70 65.625,0.40 67.500,1.70 69.375,0.40 71.250,1.70 73.125,0.40 75.000,1.70 76.875,0.40 78.750,1.70 80.625,0.40 82.500,1.70 84.375,0.40 86.250,1.70 88.125,0.40 90.000,1.70 91.875,0.40 93.750,1.70 95.625,0.40 97.500,1.70 99.375,0.40 101.250,1.70 103.125,0.40 105.000,1.70 106.875,0.40 108.750,1.70 110.625,0.40 112.500,1.70 114.375,0.40 116.250,1.70 118.125,0.40 120.000,1.70 121.875,0.40 123.750,1.70 125.625,0.40 127.500,1.70 129.375,0.40 131.250,1.70 133.125,0.40 135.000,1.70 136.875,0.40 138.750,1.70 140.625,0.40 142.500,1.70 144.375,0.40 146.250,1.70 148.125,0.40 150.000,1.70 151.875,0.40 153.750,1.70 155.625,0.40 157.500,1.70 159.375,0.40 161.250,1.70 163.125,0.40 165.000,1.70 166.875,0.40 168.750,1.70" fill="none" stroke="#c24a42" stroke-width="0.8"/></svg>
<svg style="position:absolute;left:397.000px;top:89.975px;overflow:visible;opacity:1.0" width="11.62" height="2"><polyline points="0.000,1.70 1.875,0.40 3.750,1.70 5.625,0.40 7.500,1.70 9.375,0.40" fill="none" stroke="#b48a2c" stroke-width="0.8"/></svg>
<svg style="position:absolute;left:459.562px;top:101.850px;overflow:visible;opacity:1.0" width="11.62" height="2"><polyline points="0.000,1.70 1.875,0.40 3.750,1.70 5.625,0.40 7.500,1.70 9.375,0.40" fill="none" stroke="#b48a2c" stroke-width="0.8"/></svg>
<svg style="position:absolute;left:411.438px;top:113.725px;overflow:visible;opacity:1.0" width="11.62" height="2"><polyline points="0.000,1.70 1.875,0.40 3.750,1.70 5.625,0.40 7.500,1.70 9.375,0.40" fill="none" stroke="#b48a2c" stroke-width="0.8"/></svg>
<svg style="position:absolute;left:416.250px;top:137.475px;overflow:visible;opacity:1.0" width="11.62" height="2"><polyline points="0.000,1.70 1.875,0.40 3.750,1.70 5.625,0.40 7.500,1.70 9.375,0.40" fill="none" stroke="#b48a2c" stroke-width="0.8"/></svg>
<svg style="position:absolute;left:469.188px;top:125.600px;overflow:visible;opacity:1.0" width="35.69" height="2"><polyline points="0.000,1.70 1.875,0.40 3.750,1.70 5.625,0.40 7.500,1.70 9.375,0.40 11.250,1.70 13.125,0.40 15.000,1.70 16.875,0.40 18.750,1.70 20.625,0.40 22.500,1.70 24.375,0.40 26.250,1.70 28.125,0.40 30.000,1.70 31.875,0.40" fill="none" stroke="#b48a2c" stroke-width="0.8"/></svg>
<div style="position:absolute;left:602.000px;top:44.000px;width:2.500px;height:0.750px;background:#333333;opacity:0.26"></div>
<div style="position:absolute;left:604.500px;top:44.000px;width:0.625px;height:0.750px;background:#333333;opacity:0.26"></div>
<div style="position:absolute;left:605.750px;top:44.000px;width:2.500px;height:0.750px;background:#333333;opacity:0.26"></div>
<div style="position:absolute;left:608.250px;top:44.000px;width:0.625px;height:0.750px;background:#8a8a8a;opacity:0.26"></div>
<div style="position:absolute;left:608.875px;top:44.000px;width:0.625px;height:0.750px;background:#924848;opacity:0.26"></div>
<div style="position:absolute;left:610.125px;top:44.000px;width:1.250px;height:0.750px;background:#924848;opacity:0.26"></div>
<div style="position:absolute;left:612.000px;top:44.000px;width:4.375px;height:0.750px;background:#924848;opacity:0.26"></div>
<div style="position:absolute;left:617.000px;top:44.000px;width:2.500px;height:0.750px;background:#924848;opacity:0.26"></div>
<div style="position:absolute;left:620.125px;top:44.000px;width:1.250px;height:0.750px;background:#924848;opacity:0.26"></div>
<div style="position:absolute;left:622.000px;top:44.000px;width:3.750px;height:0.750px;background:#924848;opacity:0.26"></div>
<div style="position:absolute;left:626.375px;top:44.000px;width:2.500px;height:0.750px;background:#924848;opacity:0.26"></div>
<div style="position:absolute;left:629.500px;top:44.000px;width:1.500px;height:0.750px;background:#924848;opacity:0.26"></div>
<div style="position:absolute;left:602.000px;top:46.500px;width:1.875px;height:0.750px;background:#3c3c98;opacity:0.26"></div>
<div style="position:absolute;left:604.500px;top:46.500px;width:2.500px;height:0.750px;background:#82704e;opacity:0.26"></div>
<div style="position:absolute;left:607.000px;top:46.500px;width:1.875px;height:0.750px;background:#333333;opacity:0.26"></div>
<div style="position:absolute;left:604.500px;top:47.750px;width:1.250px;height:0.750px;background:#333333;opacity:0.26"></div>
<div style="position:absolute;left:605.750px;top:47.750px;width:0.625px;height:0.750px;background:#333333;opacity:0.26"></div>
<div style="position:absolute;left:606.375px;top:47.750px;width:3.125px;height:0.750px;background:#333333;opacity:0.26"></div>
<div style="position:absolute;left:609.500px;top:47.750px;width:0.625px;height:0.750px;background:#333333;opacity:0.26"></div>
<div style="position:absolute;left:610.125px;top:47.750px;width:9.375px;height:0.750px;background:#924848;opacity:0.26"></div>
<div style="position:absolute;left:620.125px;top:47.750px;width:1.250px;height:0.750px;background:#924848;opacity:0.26"></div>
<div style="position:absolute;left:622.000px;top:47.750px;width:5.000px;height:0.750px;background:#924848;opacity:0.26"></div>
<div style="position:absolute;left:627.000px;top:47.750px;width:0.625px;height:0.750px;background:#333333;opacity:0.26"></div>
<div style="position:absolute;left:604.500px;top:49.000px;width:6.250px;height:0.750px;background:#283468;opacity:0.26"></div>
<div style="position:absolute;left:611.375px;top:49.000px;width:0.625px;height:0.750px;background:#333333;opacity:0.26"></div>
<div style="position:absolute;left:612.625px;top:49.000px;width:1.250px;height:0.750px;background:#333333;opacity:0.26"></div>
<div style="position:absolute;left:613.875px;top:49.000px;width:0.625px;height:0.750px;background:#333333;opacity:0.26"></div>
<div style="position:absolute;left:614.500px;top:49.000px;width:5.625px;height:0.750px;background:#333333;opacity:0.26"></div>
<div style="position:absolute;left:620.125px;top:49.000px;width:0.625px;height:0.750px;background:#333333;opacity:0.26"></div>
<div style="position:absolute;left:620.750px;top:49.000px;width:3.125px;height:0.750px;background:#283468;opacity:0.26"></div>
<div style="position:absolute;left:623.875px;top:49.000px;width:0.625px;height:0.750px;background:#333333;opacity:0.26"></div>
<div style="position:absolute;left:624.500px;top:49.000px;width:3.750px;height:0.750px;background:#924848;opacity:0.26"></div>
<div style="position:absolute;left:628.875px;top:49.000px;width:2.125px;height:0.750px;background:#924848;opacity:0.26"></div>
<div style="position:absolute;left:604.500px;top:50.250px;width:1.250px;height:0.750px;background:#9a50b0;opacity:0.26"></div>
<div style="position:absolute;left:606.375px;top:50.250px;width:1.250px;height:0.750px;background:#333333;opacity:0.26"></div>
<div style="position:absolute;left:607.625px;top:50.250px;width:0.625px;height:0.750px;background:#333333;opacity:0.26"></div>
<div style="position:absolute;left:608.250px;top:50.250px;width:3.750px;height:0.750px;background:#333333;opacity:0.26"></div>
<div style="position:absolute;left:612.000px;top:50.250px;width:0.625px;height:0.750px;background:#333333;opacity:0.26"></div>
<div style="position:absolute;left:612.625px;top:50.250px;width:3.750px;height:0.750px;background:#924848;opacity:0.26"></div>
<div style="position:absolute;left:616.375px;top:50.250px;width:1.250px;height:0.750px;background:#333333;opacity:0.26"></div>
<div style="position:absolute;left:607.000px;top:51.500px;width:5.000px;height:0.750px;background:#283468;opacity:0.26"></div>
<div style="position:absolute;left:612.625px;top:51.500px;width:0.625px;height:0.750px;background:#333333;opacity:0.26"></div>
<div style="position:absolute;left:613.875px;top:51.500px;width:4.375px;height:0.750px;background:#82704e;opacity:0.26"></div>
<div style="position:absolute;left:618.250px;top:51.500px;width:0.625px;height:0.750px;background:#333333;opacity:0.26"></div>
<div style="position:absolute;left:618.875px;top:51.500px;width:6.250px;height:0.750px;background:#283468;opacity:0.26"></div>
<div style="position:absolute;left:625.125px;top:51.500px;width:0.625px;height:0.750px;background:#333333;opacity:0.26"></div>
<div style="position:absolute;left:607.000px;top:52.750px;width:1.250px;height:0.750px;background:#333333;opacity:0.26"></div>
<div style="position:absolute;left:608.250px;top:52.750px;width:0.625px;height:0.750px;background:#333333;opacity:0.26"></div>
<div style="position:absolute;left:608.875px;top:52.750px;width:5.625px;height:0.750px;background:#333333;opacity:0.26"></div>
<div style="position:absolute;left:614.500px;top:52.750px;width:0.625px;height:0.750px;background:#333333;opacity:0.26"></div>
<div style="position:absolute;left:615.125px;top:52.750px;width:3.125px;height:0.750px;background:#283468;opacity:0.26"></div>
<div style="position:absolute;left:618.250px;top:52.750px;width:0.625px;height:0.750px;background:#333333;opacity:0.26"></div>
<div style="position:absolute;left:618.875px;top:52.750px;width:6.250px;height:0.750px;background:#924848;opacity:0.26"></div>
<div style="position:absolute;left:625.125px;top:52.750px;width:0.625px;height:0.750px;background:#333333;opacity:0.26"></div>
<div style="position:absolute;left:626.375px;top:52.750px;width:3.125px;height:0.750px;background:#283468;opacity:0.26"></div>
<div style="position:absolute;left:629.500px;top:52.750px;width:0.625px;height:0.750px;background:#333333;opacity:0.26"></div>
<div style="position:absolute;left:630.125px;top:52.750px;width:0.875px;height:0.750px;background:#283468;opacity:0.26"></div>
<div style="position:absolute;left:602.000px;top:55.250px;width:1.250px;height:0.750px;background:#9a50b0;opacity:0.26"></div>
<div style="position:absolute;left:603.875px;top:55.250px;width:5.000px;height:0.750px;background:#283468;opacity:0.26"></div>
<div style="position:absolute;left:609.500px;top:55.250px;width:1.250px;height:0.750px;background:#333333;opacity:0.26"></div>
<div style="position:absolute;left:611.375px;top:55.250px;width:6.250px;height:0.750px;background:#924848;opacity:0.26"></div>
<div style="position:absolute;left:617.625px;top:55.250px;width:0.625px;height:0.750px;background:#333333;opacity:0.26"></div>
<div style="position:absolute;left:604.500px;top:56.500px;width:2.500px;height:0.750px;background:#82704e;opacity:0.26"></div>
<div style="position:absolute;left:607.000px;top:56.500px;width:1.250px;height:0.750px;background:#333333;opacity:0.26"></div>
<div style="position:absolute;left:602.000px;top:43.750px;width:29.200px;height:1.000px;background:#c84050;opacity:0.9"></div>
<div style="position:absolute;left:602.250px;top:46.100px;width:28.300px;height:7.700px;background:#eed9a0"></div>
<div style="position:absolute;left:603.2px;top:45.6px;width:27px;height:8px;overflow:hidden;white-space:pre;font-family:'Liberation Sans',sans-serif;font-size:7.6px;line-height:8px;color:#a88a3a;letter-spacing:-0.25px">Hxsxxxnnsnnsxs</div>
<div style="position:absolute;left:631.250px;top:43.750px;width:8.000px;height:329.250px;background:#c6c6c8"></div>
<div style="position:absolute;left:631.000px;top:43.750px;width:0.600px;height:422.500px;background:#e0e0e0"></div>
<div style="position:absolute;left:626.000px;top:373.000px;width:0.800px;height:93.250px;background:#f6f6f6"></div>
<div style="position:absolute;left:595.600px;top:43.750px;width:1.200px;height:422.500px;background:#f1f1f1"></div>
<div style="position:absolute;left:631.000px;top:135.900px;width:7.800px;height:1.000px;background:#505050"></div>
<div style="position:absolute;left:634.400px;top:137.000px;width:2.900px;height:8.000px;background:#a6a6a6"></div>
<div style="position:absolute;left:376.800px;top:458.800px;width:79.000px;height:7.450px;background:#c3c3c3"></div>
<svg style="position:absolute;left:0;top:0;" width="640" height="480" viewBox="0 0 640 480"><path d="M509.2 228.6 H510.7 L511.5 229.3 L512.3 228.6 H513.9 M511.5 229.3 V238.0 M509.2 238.7 H510.7 L511.5 238.0 L512.3 238.7 H513.9" fill="none" stroke="#1a1a1a" stroke-width="1.0"/></svg>
<div style="position:absolute;left:0.000px;top:466.250px;width:640.000px;height:13.750px;background:#007acc"></div>
<svg style="position:absolute;left:0;top:0;" width="640" height="480" viewBox="0 0 640 480"><circle cx="13.8" cy="472.9" r="3.7" fill="none" stroke="#fff" stroke-width="0.8"/><path d="M12.2 471.3 L15.4 474.5 M15.4 471.3 L12.2 474.5" stroke="#fff" stroke-width="0.8"/><path d="M30.4 469.2 L34.2 476.2 H26.6 Z" fill="none" stroke="#fff" stroke-width="0.8" stroke-linejoin="round"/><path d="M30.4 471.6 V474.0 M30.4 474.8 V475.6" stroke="#fff" stroke-width="0.8"/></svg>
<div style="position:absolute;left:20.200px;top:468.800px;white-space:pre;font-size:7.2px;color:#ffffff;line-height:10px;-webkit-text-stroke:0.25px #ffffff">2</div>
<div style="position:absolute;left:37.000px;top:468.800px;white-space:pre;font-size:7.2px;color:#ffffff;line-height:10px;-webkit-text-stroke:0.25px #ffffff">7</div>
<div style="position:absolute;left:357.800px;top:468.800px;white-space:pre;font-size:7.2px;color:#ffffff;line-height:10px;-webkit-text-stroke:0.25px #ffffff">Ln 11, Col 11</div>
<div style="position:absolute;left:410.600px;top:468.800px;white-space:pre;font-size:7.2px;color:#ffffff;line-height:10px;-webkit-text-stroke:0.25px #ffffff">Spaces: 4</div>
<div style="position:absolute;left:451.700px;top:468.800px;white-space:pre;font-size:7.2px;color:#ffffff;line-height:10px;-webkit-text-stroke:0.25px #ffffff">UTF-8</div>
<div style="position:absolute;left:480.900px;top:468.800px;white-space:pre;font-size:7.2px;color:#ffffff;line-height:10px;-webkit-text-stroke:0.25px #ffffff">CRLF</div>
<svg style="position:absolute;left:0;top:0;" width="640" height="480" viewBox="0 0 640 480"><path d="M509.3 470.1 C508.2 470.1 508.4 471.6 508.4 472.4 C508.4 473.0 508.0 473.2 507.4 473.2 C508.0 473.2 508.4 473.4 508.4 474.0 C508.4 474.8 508.2 476.3 509.3 476.3" fill="none" stroke="#fff" stroke-width="0.75"/><path d="M510.6 474.6 V472.2 C510.6 470.3 513.0 470.3 513.0 472.2 V473.6" fill="none" stroke="#fff" stroke-width="0.75"/><circle cx="512.5" cy="475.4" r="1.5" fill="#fff"/></svg>
<div style="position:absolute;left:518.100px;top:468.800px;white-space:pre;font-size:7.2px;color:#ffffff;line-height:10px;-webkit-text-stroke:0.25px #ffffff">Python</div>
<div style="position:absolute;left:551.700px;top:468.800px;white-space:pre;font-size:7.2px;color:#ffffff;line-height:10px;-webkit-text-stroke:0.25px #ffffff">3.11.2 64-bit</div>
<svg style="position:absolute;left:0;top:0;" width="640" height="480" viewBox="0 0 640 480"><path d="M605.6 469.4 H612.2 V473.6 H610.6 L609.2 475.2 V473.6" fill="none" stroke="#fff" stroke-width="0.8"/><circle cx="606.9" cy="472.6" r="1.4" fill="#007acc" stroke="#fff" stroke-width="0.8"/><path d="M603.9 476.6 C604.4 474.2 609.4 474.2 609.9 476.6" fill="none" stroke="#fff" stroke-width="0.8"/><path d="M623.6 475.4 C624.4 474.6 624.1 473.6 624.2 472.2 C624.3 470.3 625.2 469.3 626.4 469.3 C627.6 469.3 628.5 470.3 628.6 472.2 C628.7 473.6 628.4 474.6 629.2 475.4 Z M625.5 476.4 H627.3" fill="none" stroke="#fff" stroke-width="0.8" stroke-linejoin="round"/></svg>
<div style="position:absolute;left:0.000px;top:0.000px;width:640.000px;height:1.000px;background:#9a9a9a"></div>
<div style="position:absolute;left:0.000px;top:1.000px;width:1.000px;height:21.000px;background:#a0a0a0"></div>
<div style="position:absolute;left:0.000px;top:21.875px;width:1.000px;height:444.400px;background:#3a3a3a"></div>
<div style="position:absolute;left:639.000px;top:1.000px;width:1.000px;height:465.250px;background:#a0a0a0"></div>
<div style="position:absolute;left:0.000px;top:466.250px;width:1.000px;height:13.750px;background:#1a78b8"></div>
<div style="position:absolute;left:639.000px;top:466.250px;width:1.000px;height:13.750px;background:#1a78b8"></div>
<div style="position:absolute;left:0.000px;top:0.000px;width:4.000px;height:4.000px;background:#9a9a9a"></div>
<div style="position:absolute;left:1.000px;top:1.000px;width:4.000px;height:4.000px;background:#dcdcdc;border-top-left-radius:3px"></div>
<div style="position:absolute;left:636.000px;top:0.000px;width:4.000px;height:4.000px;background:#9a9a9a"></div>
<div style="position:absolute;left:635.000px;top:1.000px;width:4.000px;height:4.000px;background:#dcdcdc;border-top-right-radius:3px"></div>
<div style="position:absolute;left:637.300px;top:45.000px;width:2.700px;height:7.600px;background:#b84a44"></div>
<div style="position:absolute;left:637.300px;top:71.000px;width:2.700px;height:45.000px;background:#8b7a4a"></div>
</body></html>
